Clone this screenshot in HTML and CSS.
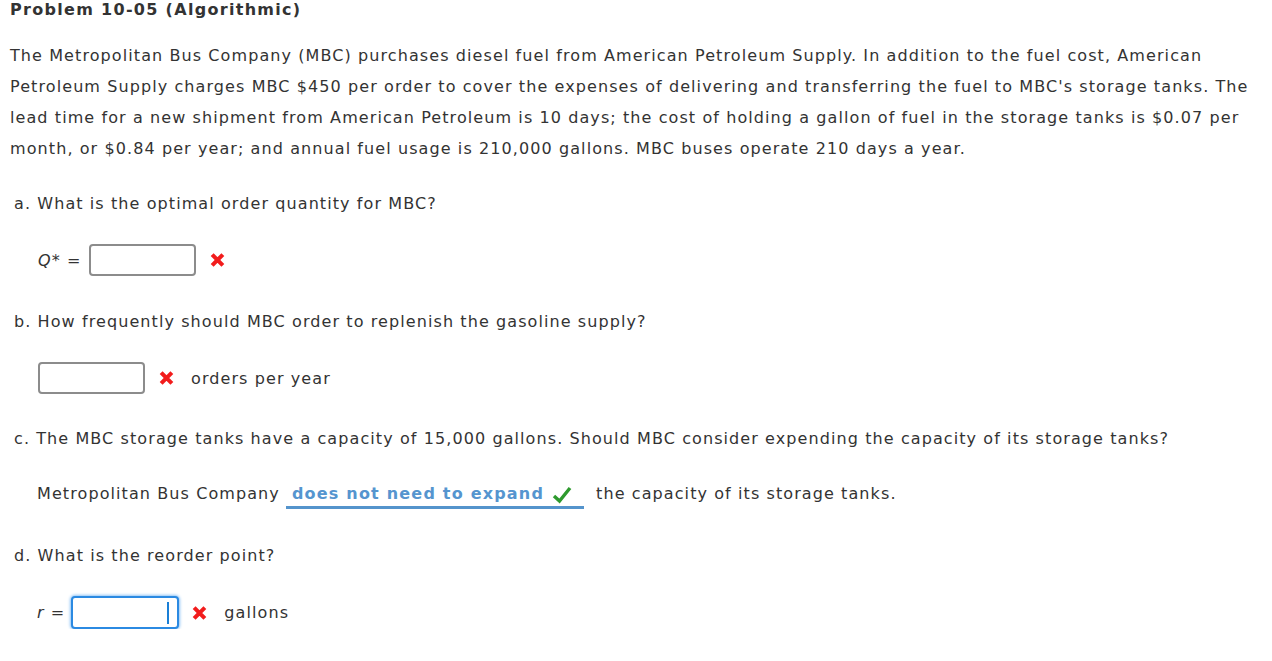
FILE: index.html
```html
<!DOCTYPE html>
<html>
<head>
<meta charset="utf-8">
<link rel="stylesheet" href="styles.css">
</head>
<body>
<div class="page">
  <h3 class="title">Problem 10-05 (Algorithmic)</h3>
  <p class="intro">The Metropolitan Bus Company (MBC) purchases diesel fuel from American Petroleum Supply. In addition to the fuel cost, American Petroleum Supply charges MBC $450 per order to cover the expenses of delivering and transferring the fuel to MBC's storage tanks. The lead time for a new shipment from American Petroleum is 10 days; the cost of holding a gallon of fuel in the storage tanks is $0.07 per month, or $0.84 per year; and annual fuel usage is 210,000 gallons. MBC buses operate 210 days a year.</p>

  <div class="q q-a">a. What is the optimal order quantity for MBC?</div>
  <div class="row row-a">
    <span class="lbl"><i>Q</i>* =</span>
    <span class="box"></span>
    <svg class="x" viewBox="0 0 14 14"><path d="M2 2 L12 12 M12 2 L2 12"/></svg>
  </div>

  <div class="q q-b">b. How frequently should MBC order to replenish the gasoline supply?</div>
  <div class="row row-b">
    <span class="box"></span>
    <svg class="x" viewBox="0 0 14 14"><path d="M2 2 L12 12 M12 2 L2 12"/></svg>
    <span class="unit">orders per year</span>
  </div>

  <div class="q q-c">c. The MBC storage tanks have a capacity of 15,000 gallons. Should MBC consider expending the capacity of its storage tanks?</div>
  <div class="row row-c">
    <span>Metropolitan Bus Company</span>
    <span class="sel"><span class="sel-text">does not need to expand</span><svg class="check" viewBox="0 0 20 18"><path d="M2 10 L7.5 15 L18 2"/></svg></span>
    <span>the capacity of its storage tanks.</span>
  </div>

  <div class="q q-d">d. What is the reorder point?</div>
  <div class="row row-d">
    <span class="lbl"><i>r</i> =</span>
    <span class="box focus"><span class="caret"></span></span>
    <svg class="x" viewBox="0 0 14 14"><path d="M2 2 L12 12 M12 2 L2 12"/></svg>
    <span class="unit">gallons</span>
  </div>
</div>
</body>
</html>
```
FILE: styles.css
```css
* { box-sizing: border-box; }
body {
  margin: 0;
  background: #fff;
  font-family: "DejaVu Sans", Verdana, sans-serif;
  font-size: 16px;
  letter-spacing: 1.09px;
  color: #333;
}
.page {
  padding-left: 10px;
}
.title {
  margin: 0;
  font-size: 16px;
  font-weight: bold;
  letter-spacing: 1.3px;
  line-height: 20px;
  color: #333;
}
.intro {
  margin: 20px 0 0 0;
  line-height: 31px;
  width: 1252px;
}
.q {
  line-height: 31px;
  padding-left: 4px;
}
.q-a { margin-top: 24px; }
.q-b { margin-top: 30px; }
.q-c { margin-top: 29px; }
.q-d { margin-top: 31px; }
.row {
  display: flex;
  align-items: center;
  height: 32px;
}
.row-a { margin-top: 25px; padding-left: 28px; }
.row-b { margin-top: 25px; padding-left: 28px; }
.row-c { margin-top: 21px; padding-left: 27px; height: 34px; align-items: flex-start; }
.row-d { margin-top: 25px; padding-left: 27px; height: 33px; }
.lbl {
  margin-right: 8px;
  white-space: nowrap;
}
.row-d .lbl { margin-right: 6px; }
.box {
  display: inline-block;
  width: 107px;
  height: 32px;
  border: 2px solid #8c8c8c;
  border-radius: 4px;
  background: #fff;
  position: relative;
}
.box.focus {
  width: 108px;
  height: 33px;
  border-color: #2b8ae2;
  box-shadow: 0 0 3px 1px #8ec3f5;
}
.caret {
  position: absolute;
  right: 8px;
  top: 4px;
  width: 2px;
  height: 22px;
  background: #1a7fd6;
}
.x {
  width: 15px;
  height: 16px;
  margin-left: 14px;
  flex: none;
}
.x path {
  stroke: #f21c1c;
  stroke-width: 3.8;
  fill: none;
}
.row-d .x { margin-left: 13px; }
.unit { margin-left: 17px; }
.sel {
  display: inline-flex;
  align-items: center;
  margin-left: 6px;
  margin-right: 12px;
  padding: 6px 12px 0 6px;
  border-bottom: 3px solid #5494cc;
  height: 34px;
}
.sel-text {
  font-weight: bold;
  color: #5595cf;
  letter-spacing: 1.2px;
}
.check {
  width: 20px;
  height: 18px;
  margin-left: 8px;
  margin-top: 2px;
}
.check path {
  stroke: #2e9a2e;
  stroke-width: 3.4;
  fill: none;
}
.row-c > span:first-child, .row-c > span:last-child {
  line-height: 38px;
}
```
